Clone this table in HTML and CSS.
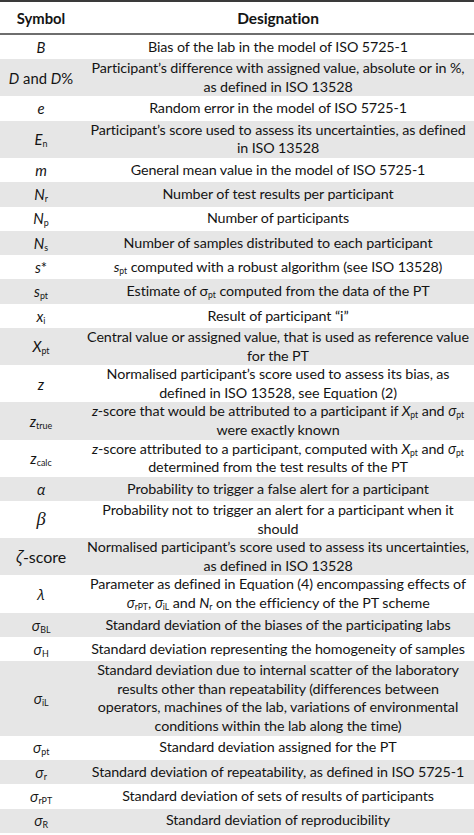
FILE: index.html
```html
<!DOCTYPE html>
<html lang="en">
<head>
<meta charset="utf-8">
<title>Symbols</title>
<link rel="stylesheet" href="styles.css">
</head>
<body>
<div class="table">
  <div class="head">
    <div class="sym">Symbol</div>
    <div class="des">Designation</div>
  </div>
  <div class="body">
    <div class="row"><div class="sym"><i>B</i></div><div class="des">Bias of the lab in the model of ISO 5725-1</div></div>
    <div class="row"><div class="sym"><i>D</i> and <i>D</i>%</div><div class="des">Participant’s difference with assigned value, absolute or in %,<br>as defined in ISO 13528</div></div>
    <div class="row"><div class="sym"><i>e</i></div><div class="des">Random error in the model of ISO 5725-1</div></div>
    <div class="row"><div class="sym"><i>E</i><span class="sub">n</span></div><div class="des">Participant’s score used to assess its uncertainties, as defined<br>in ISO 13528</div></div>
    <div class="row"><div class="sym"><i>m</i></div><div class="des">General mean value in the model of ISO 5725-1</div></div>
    <div class="row"><div class="sym"><i>N</i><span class="sub">r</span></div><div class="des">Number of test results per participant</div></div>
    <div class="row"><div class="sym"><i>N</i><span class="sub">p</span></div><div class="des">Number of participants</div></div>
    <div class="row"><div class="sym"><i>N</i><span class="sub">s</span></div><div class="des">Number of samples distributed to each participant</div></div>
    <div class="row"><div class="sym"><i>s</i>*</div><div class="des"><i>s</i><span class="sub">pt</span> computed with a robust algorithm (see ISO 13528)</div></div>
    <div class="row"><div class="sym"><i>s</i><span class="sub">pt</span></div><div class="des">Estimate of σ<span class="sub">pt</span> computed from the data of the PT</div></div>
    <div class="row"><div class="sym"><i>x</i><span class="sub">i</span></div><div class="des">Result of participant “i”</div></div>
    <div class="row"><div class="sym"><i>X</i><span class="sub">pt</span></div><div class="des">Central value or assigned value, that is used as reference value<br>for the PT</div></div>
    <div class="row"><div class="sym"><i>z</i></div><div class="des">Normalised participant’s score used to assess its bias, as<br>defined in ISO 13528, see Equation (2)</div></div>
    <div class="row"><div class="sym"><i>z</i><span class="sub">true</span></div><div class="des"><i>z</i>-score that would be attributed to a participant if <i>X</i><span class="sub">pt</span> and <i class="gr">σ</i><span class="sub">pt</span><br>were exactly known</div></div>
    <div class="row"><div class="sym"><i>z</i><span class="sub">calc</span></div><div class="des"><i>z</i>-score attributed to a participant, computed with <i>X</i><span class="sub">pt</span> and <i class="gr">σ</i><span class="sub">pt</span><br>determined from the test results of the PT</div></div>
    <div class="row"><div class="sym"><i class="gr">α</i></div><div class="des">Probability to trigger a false alert for a participant</div></div>
    <div class="row"><div class="sym"><i class="gr beta">β</i></div><div class="des">Probability not to trigger an alert for a participant when it<br>should</div></div>
    <div class="row"><div class="sym big"><i class="gr">ζ</i>-score</div><div class="des">Normalised participant’s score used to assess its uncertainties,<br>as defined in ISO 13528</div></div>
    <div class="row"><div class="sym"><i class="gr">λ</i></div><div class="des">Parameter as defined in Equation (4) encompassing effects of<br><i class="gr">σ</i><span class="sub">rPT</span>, <i class="gr">σ</i><span class="sub">iL</span> and <i>N</i><span class="sub">r</span> on the efficiency of the PT scheme</div></div>
    <div class="row"><div class="sym"><i class="gr">σ</i><span class="sub">BL</span></div><div class="des">Standard deviation of the biases of the participating labs</div></div>
    <div class="row"><div class="sym"><i class="gr">σ</i><span class="sub">H</span></div><div class="des">Standard deviation representing the homogeneity of samples</div></div>
    <div class="row"><div class="sym"><i class="gr">σ</i><span class="sub">iL</span></div><div class="des">Standard deviation due to internal scatter of the laboratory<br>results other than repeatability (differences between<br>operators, machines of the lab, variations of environmental<br>conditions within the lab along the time)</div></div>
    <div class="row"><div class="sym"><i class="gr">σ</i><span class="sub">pt</span></div><div class="des">Standard deviation assigned for the PT</div></div>
    <div class="row"><div class="sym"><i class="gr">σ</i><span class="sub">r</span></div><div class="des">Standard deviation of repeatability, as defined in ISO 5725-1</div></div>
    <div class="row"><div class="sym"><i class="gr">σ</i><span class="sub">rPT</span></div><div class="des">Standard deviation of sets of results of participants</div></div>
    <div class="row"><div class="sym"><i class="gr">σ</i><span class="sub">R</span></div><div class="des">Standard deviation of reproducibility</div></div>
  </div>
</div>
</body>
</html>
```
FILE: styles.css
```css
html, body {
  margin: 0;
  padding: 0;
  background: #ffffff;
}

body {
  font-family: Lato, "Open Sans", "DejaVu Sans", sans-serif;
  font-size: 14.3px;
  color: #141414;
}

.table {
  width: 474px;
  border-top: 2px solid #3a3a3a;
}

.head {
  display: grid;
  grid-template-columns: 82px 1fr;
  align-items: center;
  height: 31px;
  border-bottom: 2px solid #6e6e6e;
  font-weight: bold;
  font-size: 15.5px;
  text-align: center;
}

.row {
  display: grid;
  grid-template-columns: 82px 1fr;
  align-items: center;
  min-height: 24.3px;
  line-height: 18.6px;
  text-align: center;
}

.body .row:nth-child(even) {
  background: #e6e6e6;
}

.sym {
  white-space: nowrap;
  font-size: 14.8px;
}

.des {
  white-space: nowrap;
  letter-spacing: -0.1px;
}

.sym.big {
  font-size: 16px;
}

.sub {
  font-size: 0.6em;
  font-style: normal;
  vertical-align: -0.2em;
  line-height: 0;
  letter-spacing: 0;
}

.gr {
  font-family: "Open Sans", "DejaVu Sans", sans-serif;
}

.beta {
  font-family: "Liberation Serif", "DejaVu Serif", serif;
  font-size: 1.25em;
  line-height: 0;
}
```
